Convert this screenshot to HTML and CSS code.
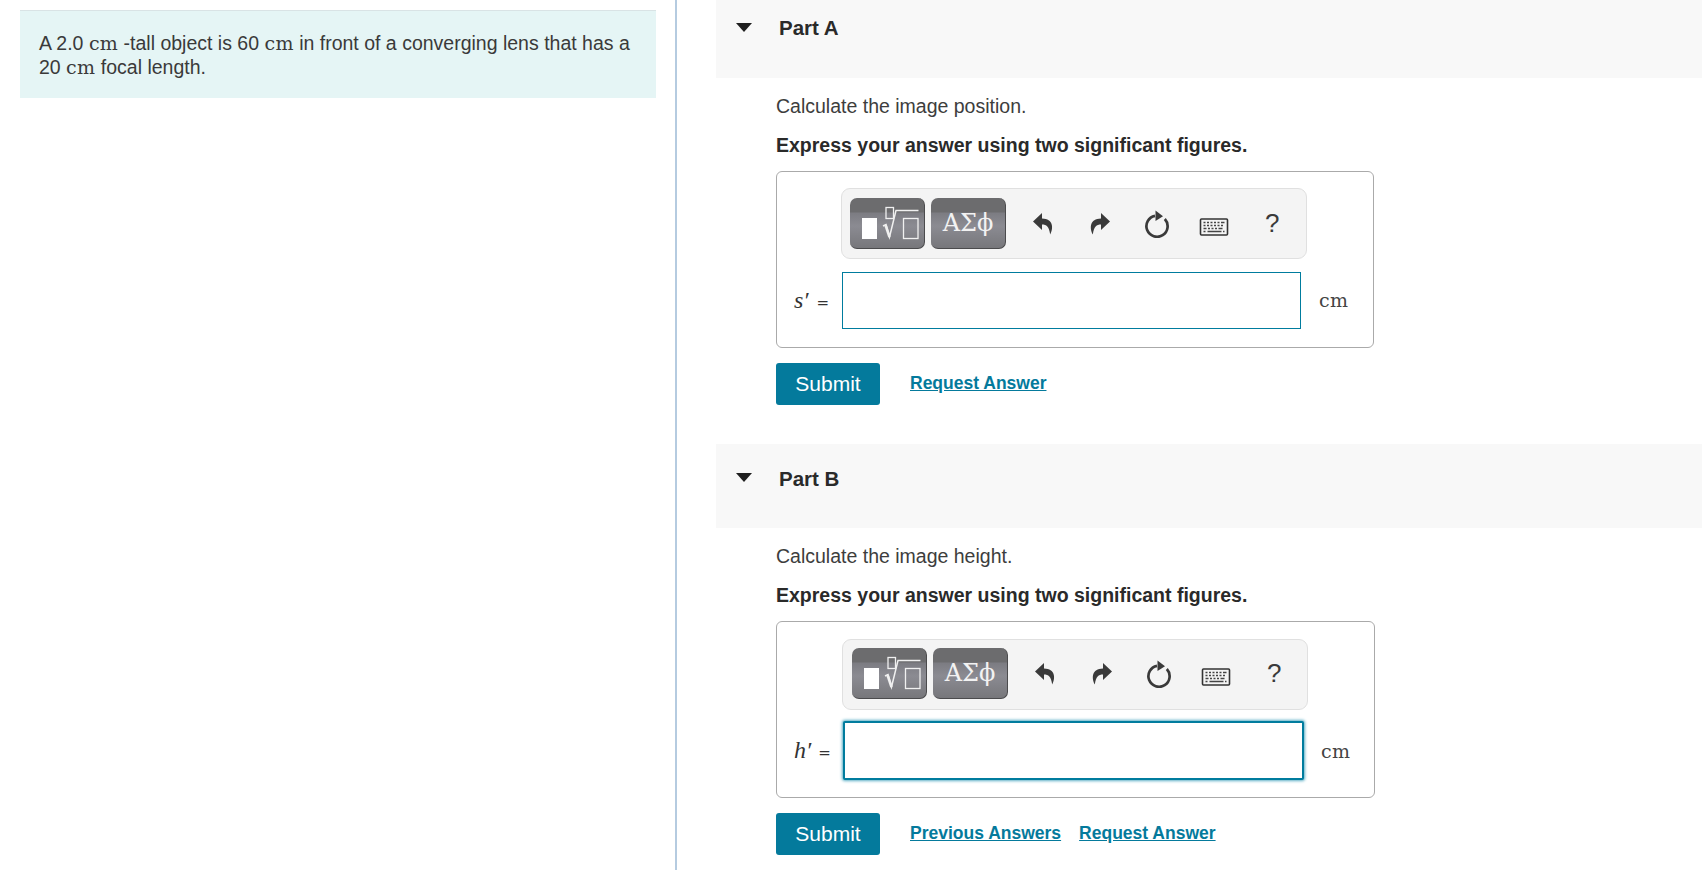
FILE: index.html
```html
<!DOCTYPE html>
<html lang="en">
<head>
<meta charset="utf-8">
<title>Lens problem</title>
<link rel="stylesheet" href="styles.css">
</head>
<body>
<svg class="defs" width="0" height="0" aria-hidden="true">
  <defs>
    <symbol id="i-undo" viewBox="0 0 22 24"><path d="M10 1 L1 9.5 L10 18 L10 12.6 C14.5 12.6 17 14.6 18.2 22.5 C21.5 16 21.5 6.8 10 6.4 Z" fill="#3a3a3a"/></symbol>
    <symbol id="i-redo" viewBox="0 0 22 24"><path d="M12 1 L21 9.5 L12 18 L12 12.6 C7.5 12.6 5 14.6 3.8 22.5 C0.5 16 0.5 6.8 12 6.4 Z" fill="#3a3a3a"/></symbol>
    <symbol id="i-reset" viewBox="0 0 26 28"><path d="M20.8 9 A10.6 10.6 0 1 1 11 5.8" fill="none" stroke="#3a3a3a" stroke-width="2.7"/><path d="M11.5 0.500 L19 6.300 L11.500 11 Z" fill="#3a3a3a"/></symbol>
    <symbol id="i-keys" viewBox="0 0 29 18">
      <rect x="1" y="1" width="27" height="16" rx="1" fill="none" stroke="#333" stroke-width="1.6"/>
      <path d="M4 4.5h2M7.5 4.5h2M11 4.5h2M14.5 4.5h2M18 4.5h2M21.5 4.5h3.5M4 7.5h2M7.5 7.5h2M11 7.5h2M14.5 7.5h2M18 7.5h2M21.5 7.5h2M4 10.5h3M8.5 10.5h2M12 10.5h2M15.5 10.5h2M19 10.5h4M4 13.5h2M8 13.5h14M23.5 13.5h1.5" stroke="#444" stroke-width="1.5" fill="none"/>
    </symbol>
    <symbol id="i-tmpl" viewBox="0 0 75 51">
      <rect x="12" y="20" width="15" height="21" fill="#fff"/>
      <rect x="36" y="9.500" width="7.500" height="11" fill="none" stroke="#f0f0f0" stroke-width="1.300"/>
      <path d="M33 28 L36 26.500 L39.500 39 L46 12.500 L68.500 12.500" fill="none" stroke="#f0f0f0" stroke-width="1.500"/>
      <path d="M35.500 27 L39.500 39" fill="none" stroke="#f0f0f0" stroke-width="2.600"/>
      <rect x="53.500" y="20.500" width="14.500" height="20" fill="none" stroke="#f0f0f0" stroke-width="1.300"/>
    </symbol>
  </defs>
</svg>
<main class="page">
  <aside class="intro-col">
    <p class="intro">A 2.0 <span class="math">cm</span> -tall object is 60 <span class="math">cm</span> in front of a converging lens that has a 20 <span class="math">cm</span> focal length.</p>
  </aside>
  <section class="parts">
    <header class="part-head part-head-a"><span class="caret"></span><h2 class="part-title">Part A</h2></header>
    <div class="part-body">
      <p class="question">Calculate the image position.</p>
      <p class="instruction">Express your answer using two significant figures.</p>
      <div class="answer-box">
        <div class="toolbar">
          <span class="tool-btn"><svg class="tmpl"><use href="#i-tmpl"/></svg></span>
          <span class="tool-btn greek">ΑΣϕ</span>
          <svg class="ico ico-undo"><use href="#i-undo"/></svg>
          <svg class="ico ico-redo"><use href="#i-redo"/></svg>
          <svg class="ico ico-reset"><use href="#i-reset"/></svg>
          <svg class="ico ico-keys"><use href="#i-keys"/></svg>
          <span class="help">?</span>
        </div>
        <div class="answer-row">
          <span class="var"><i>s′</i><span class="eq">=</span></span>
          <div class="field"></div>
          <span class="unit">cm</span>
        </div>
      </div>
      <div class="actions">
        <button class="submit" type="button">Submit</button>
        <a class="link" href="#">Request Answer</a>
      </div>
    </div>
    <header class="part-head part-head-b"><span class="caret"></span><h2 class="part-title">Part B</h2></header>
    <div class="part-body part-body-b">
      <p class="question">Calculate the image height.</p>
      <p class="instruction">Express your answer using two significant figures.</p>
      <div class="answer-box answer-box-b">
        <div class="toolbar">
          <span class="tool-btn"><svg class="tmpl"><use href="#i-tmpl"/></svg></span>
          <span class="tool-btn greek">ΑΣϕ</span>
          <svg class="ico ico-undo"><use href="#i-undo"/></svg>
          <svg class="ico ico-redo"><use href="#i-redo"/></svg>
          <svg class="ico ico-reset"><use href="#i-reset"/></svg>
          <svg class="ico ico-keys"><use href="#i-keys"/></svg>
          <span class="help">?</span>
        </div>
        <div class="answer-row">
          <span class="var"><i>h′</i><span class="eq">=</span></span>
          <div class="field field-focus"></div>
          <span class="unit">cm</span>
        </div>
      </div>
      <div class="actions">
        <button class="submit" type="button">Submit</button>
        <a class="link" href="#">Previous Answers</a>
        <a class="link" href="#">Request Answer</a>
      </div>
    </div>
  </section>
</main>
</body>
</html>
```
FILE: styles.css
```css
* { box-sizing: border-box; }
html, body { margin: 0; height: 870px; overflow: hidden; background: #fff; }
body { font-family: "Liberation Sans", Arial, sans-serif; color: #333; font-size: 19.5px; }
.defs { position: absolute; }
.page { display: flex; height: 870px; }

.intro-col { width: 677px; flex: none; padding: 10px 20px 0; border-right: 2px solid #b5cbe0; }
.intro { margin: 0; width: 636px; height: 88px; padding: 20px 20px 0 19px; background: #e5f5f5; border-top: 1px solid #d9e3e5; line-height: 24px; color: #3a3a3a; }
.math { font-family: "DejaVu Serif", serif; font-size: 19px; line-height: 1; letter-spacing: 0.3px; }

.parts { flex: 1; padding-left: 39px; min-width: 0; }
.part-head { background: #f8f8f8; display: flex; align-items: flex-start; padding-left: 20px; }
.part-head-a { height: 78px; padding-top: 17px; }
.part-head-b { height: 84px; padding-top: 24px; }
.caret { width: 0; height: 0; margin-top: 6px; border-left: 8px solid transparent; border-right: 8px solid transparent; border-top: 9px solid #1f1f1f; }
.part-head-b .caret { margin-top: 5px; }
.part-title { margin: 0 0 0 27px; font-size: 20.500px; font-weight: 700; line-height: 22px; color: #2a2a2a; }

.part-body { padding: 17px 0 0 60px; height: 366px; }
.question { margin: 0; line-height: 22px; color: #3d3d3d; }
.instruction { margin: 17px 0 0; line-height: 22px; font-weight: 700; color: #2a2a2a; }

.answer-box { margin-top: 15px; width: 598px; height: 177px; border: 1px solid #aaa; border-radius: 6px; padding: 16px 0 0 64px; }
.answer-box-b { width: 599px; padding: 17px 0 0 65px; }

.toolbar { width: 466px; height: 71px; background: #f4f4f4; border: 1px solid #e0e0e0; border-radius: 9px; display: flex; align-items: flex-start; padding: 9px 0 0 8px; }
.answer-box-b .toolbar { padding: 8px 0 0 9px; }
.tool-btn { width: 75px; height: 51px; margin-right: 6px; flex: none; border-radius: 7px; border: 1px solid #4b4b4d; border-width: 0 1px 1px 0; background: linear-gradient(#6c6c6e 0, #6c6c6e 14px, #7c7c82 15px, #8b8b92 28px, #77777b 100%); display: block; }
.tmpl { width: 75px; height: 51px; display: block; }
.greek { color: #f2f2f2; font-family: "DejaVu Serif", serif; font-size: 24px; line-height: 50px; text-align: center; white-space: nowrap; }

.ico { flex: none; display: block; }
.ico-undo { width: 22px; height: 24px; margin: 14px 0 0 20px; }
.ico-redo { width: 22px; height: 24px; margin: 14px 0 0 35px; }
.ico-reset { width: 26px; height: 28px; margin: 12px 0 0 33px; }
.ico-keys { width: 30px; height: 18px; margin: 20px 0 0 29px; }
.help { font-size: 26px; line-height: 30px; margin: 10px 0 0 36px; color: #3a3a3a; }

.answer-row { display: flex; align-items: center; margin: 12px 0 0 -64px; height: 58px; }
.answer-box-b .answer-row { margin: 11px 0 0 -65px; height: 59px; }
.var { width: 65px; padding-left: 17px; flex: none; font-family: "Liberation Serif", serif; font-size: 24px; color: #333; white-space: nowrap; }
.answer-box-b .var { width: 66px; }
.eq { font-family: "DejaVu Sans", sans-serif; font-size: 15px; margin-left: 8px; }
.answer-box-b .eq { margin-left: 7px; }
.field { width: 459px; height: 57px; flex: none; border: 1px solid #007c9e; background: #fff; }
.field-focus { width: 461px; height: 59px; border: 2px solid #007c9e; border-radius: 2px; box-shadow: 0 0 3px 1px #5aaec5; }
.unit { margin-left: 18px; font-family: "DejaVu Serif", serif; font-size: 19px; letter-spacing: 0.3px; color: #444; }
.answer-box-b .unit { margin-left: 17px; }

.actions { display: flex; align-items: center; margin-top: 15px; height: 42px; }
.submit { width: 104px; height: 42px; border: 0; border-radius: 3px; background: #047a9c; color: #fff; font: 21px "Liberation Sans", Arial, sans-serif; padding: 0; margin-right: 30px; }
.link { color: #047a9c; font-weight: 700; font-size: 17.500px; margin: 0 18px 2px 0; text-decoration: underline; }
```
